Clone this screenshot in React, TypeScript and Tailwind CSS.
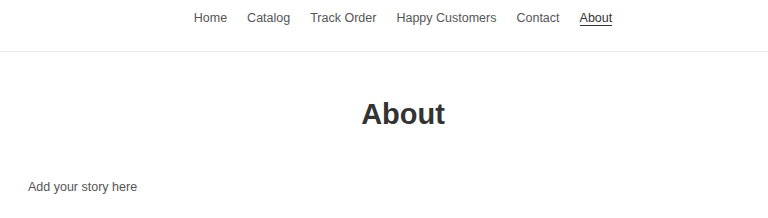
import React from 'react';

const links = ['Home', 'Catalog', 'Track Order', 'Happy Customers', 'Contact', 'About'];

export default function App() {
  return (
    <div className="min-h-[218px] bg-white font-['Liberation_Sans',Arial,sans-serif] text-[#3a3a3a]">
      {/* Header nav */}
      <header className="h-[52px] border-b border-[#ebebeb]">
        <nav className="flex justify-center gap-5 pl-[38px] pt-[11px]">
          {links.map((l) => (
            <a
              key={l}
              href="#"
              className={
                l === 'About'
                  ? 'text-[12.5px] leading-[14px] text-[#333] border-b border-[#333]'
                  : 'text-[12.5px] leading-[14px] text-[#555]'
              }
            >
              {l}
            </a>
          ))}
        </nav>
      </header>

      {/* Page content */}
      <main className="px-7">
        <h1 className="mt-[46px] pl-[38px] text-center text-[29px] leading-[32px] font-bold text-[#333]">About</h1>
        <p className="mt-[50px] text-[12.5px] leading-[15px] text-[#555]">Add your story here</p>
      </main>
    </div>
  );
}
